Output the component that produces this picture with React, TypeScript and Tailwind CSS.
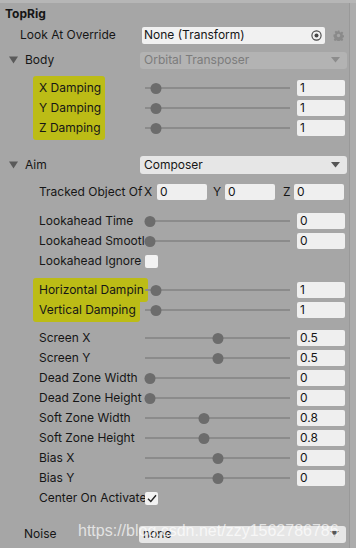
const font = { fontFamily: "Inter, 'Liberation Sans', sans-serif" };

interface SliderRowProps {
  label: string;
  value: string;
  pos: number; // knob centre, px from track start
  mark?: boolean;
}

const Label = ({ text, mark }: { text: string; mark?: boolean }) => (
  <div className="w-[106px] shrink-0 whitespace-nowrap">
    {mark ? (
      <span className="relative inline-block">
        <span className="absolute -left-[6px] -right-[4px] top-[-3px] bottom-[-3px] rounded-[3px] bg-[#bcbc16]" />
        <span className="relative">{text}</span>
      </span>
    ) : (
      text
    )}
  </div>
);

const SliderRow = ({ label, value, pos, mark }: SliderRowProps) => (
  <div className="flex items-center h-[20px] pl-[39px] pr-[11px]">
    <Label text={label} mark={mark} />
    <div className="relative w-[145px] h-[10px] flex items-center">
      <div className="w-full h-[2px] bg-[#8b8b8b]" />
      <div
        className="absolute top-0 w-[11px] h-[11px] -translate-x-1/2 rounded-full bg-[#6c6c6c]"
        style={{ left: pos }}
      />
    </div>
    <div className="ml-[7px] w-[48px] h-[16px] bg-[#efefef] rounded-[2px] pl-[3px] leading-[16px]">
      {value}
    </div>
  </div>
);

const Field = ({ value }: { value: string }) => (
  <div className="w-[50px] h-[16px] bg-[#efefef] rounded-[2px] pl-[3px] leading-[16px]">{value}</div>
);

const Arrow = ({ color }: { color: string }) => (
  <svg width="9" height="6" viewBox="0 0 9 6">
    <path d="M0 0 H9 L4.5 5.5 Z" fill={color} />
  </svg>
);

const Foldout = () => (
  <svg width="9" height="8" viewBox="0 0 9 8" className="mr-[7px]">
    <path d="M0 0.5 H9 L4.5 7.5 Z" fill="#5a5a5a" />
  </svg>
);

const App = () => {
  return (
    <div
      className="relative w-[356px] h-[548px] overflow-hidden bg-[#a6a6a6] text-[12px] text-[#161616] border-t-[3px] border-[#b6b6b6] pt-[1px]"
      style={font}
    >
      <div className="absolute right-0 top-0 bottom-0 w-[7px] border-l border-[#999999] bg-[#acacac]" />

      <div className="h-[20px] pl-[5px] flex items-center font-bold">TopRig</div>

      <div className="mt-[1px] h-[20px] flex items-center pl-[20px]">
        <div className="w-[122px]">Look At Override</div>
        <div className="w-[183px] h-[17px] bg-[#f1f1f1] rounded-[2px] flex items-center justify-between pl-[2px] pr-[3px]">
          <span>None (Transform)</span>
          <svg width="11" height="11" viewBox="0 0 11 11">
            <circle cx="5.5" cy="5.5" r="4.6" fill="none" stroke="#444" strokeWidth="1.1" />
            <circle cx="5.5" cy="5.5" r="2" fill="#444" />
          </svg>
        </div>
        <svg width="11" height="11" viewBox="0 0 12 12" className="ml-[8px]">
          <path
            d="M5 0.5h2l.3 1.6 1.2.5 1.3-.9 1.4 1.4-.9 1.3.5 1.2 1.7.3v2l-1.7.3-.5 1.2.9 1.3-1.4 1.4-1.3-.9-1.2.5-.3 1.6H5l-.3-1.6-1.2-.5-1.3.9-1.4-1.4.9-1.3-.5-1.2L.5 7V5l1.7-.3.5-1.2-.9-1.3 1.4-1.4 1.3.9 1.2-.5z"
            fill="#8a8a8a"
          />
          <circle cx="6" cy="6" r="1.8" fill="#a6a6a6" />
        </svg>
      </div>

      <div className="mt-[5px] h-[20px] flex items-center pl-[9px]">
        <Foldout />
        <div className="w-[115px]">Body</div>
        <div className="w-[207px] h-[17px] bg-[#b3b3b3] rounded-[3px] flex items-center justify-between pl-[4px] pr-[7px] text-[#7c7c7c]">
          <span>Orbital Transposer</span>
          <Arrow color="#8c8c8c" />
        </div>
      </div>

      <div className="mt-[8px]">
        <SliderRow label="X Damping" value="1" pos={11} mark />
        <SliderRow label="Y Damping" value="1" pos={11} mark />
        <SliderRow label="Z Damping" value="1" pos={11} mark />
      </div>

      <div className="mt-[17px] h-[20px] flex items-center pl-[9px]">
        <Foldout />
        <div className="w-[115px]">Aim</div>
        <div className="w-[207px] h-[18px] bg-[#e6e6e6] rounded-[3px] flex items-center justify-between pl-[4px] pr-[7px]">
          <span>Composer</span>
          <Arrow color="#555" />
        </div>
      </div>

      <div className="mt-[7px] h-[20px] flex items-center pl-[39px]">
        <div className="w-[105px] whitespace-nowrap">Tracked Object Of</div>
        <span className="w-[13px]">X</span>
        <Field value="0" />
        <span className="ml-[6px] w-[12px]">Y</span>
        <Field value="0" />
        <span className="ml-[8px] w-[11px]">Z</span>
        <Field value="0" />
      </div>

      <div className="mt-[9px]">
        <SliderRow label="Lookahead Time" value="0" pos={5} />
        <SliderRow label="Lookahead Smootl" value="0" pos={5} />
        <div className="flex items-center h-[20px] pl-[39px]">
          <Label text="Lookahead Ignore" />
          <div className="w-[13px] h-[13px] bg-[#f2f2f2] rounded-[2px]" />
        </div>
      </div>

      <div className="mt-[9px]">
        <SliderRow label="Horizontal Dampin" value="1" pos={11} mark />
        <SliderRow label="Vertical Damping" value="1" pos={11} mark />
      </div>

      <div className="mt-[8px]">
        <SliderRow label="Screen X" value="0.5" pos={73} />
        <SliderRow label="Screen Y" value="0.5" pos={73} />
        <SliderRow label="Dead Zone Width" value="0" pos={5} />
        <SliderRow label="Dead Zone Height" value="0" pos={5} />
        <SliderRow label="Soft Zone Width" value="0.8" pos={59} />
        <SliderRow label="Soft Zone Height" value="0.8" pos={59} />
        <SliderRow label="Bias X" value="0" pos={73} />
        <SliderRow label="Bias Y" value="0" pos={73} />
        <div className="flex items-center h-[20px] pl-[39px]">
          <Label text="Center On Activate" />
          <div className="w-[13px] h-[13px] bg-[#f2f2f2] rounded-[2px] flex items-center justify-center">
            <svg width="10" height="9" viewBox="0 0 10 9">
              <path d="M1 4.8 L3.8 7.4 L9 1.2" fill="none" stroke="#222" strokeWidth="1.4" />
            </svg>
          </div>
        </div>
      </div>

      <div className="mt-[16px] h-[20px] flex items-center pl-[24px]">
        <div className="w-[115px]">Noise</div>
        <div className="w-[207px] h-[17px] bg-[#e6e6e6] rounded-[3px] flex items-center justify-between pl-[4px] pr-[7px]">
          <span>none</span>
          <Arrow color="#555" />
        </div>
      </div>

      <div
        className="absolute left-[78px] top-[516px] text-[16px] text-white/70 whitespace-nowrap"
        style={{ fontFamily: "'Liberation Sans', Arial, sans-serif" }}
      >
        https://blog.csdn.net/zzy1562786786
      </div>
    </div>
  );
};

export default App;
